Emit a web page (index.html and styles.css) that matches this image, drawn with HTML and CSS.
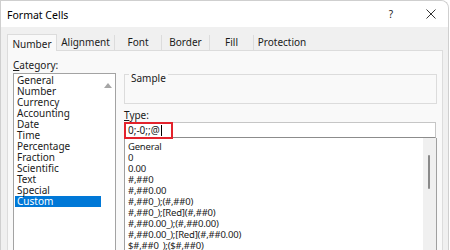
FILE: index.html
```html
<!DOCTYPE html>
<html>
<head>
<meta charset="utf-8">
<link rel="stylesheet" href="styles.css">
</head>
<body>
<div class="window">
  <div class="titlebar">
    <span class="title">Format Cells</span>
    <span class="help">?</span>
    <span class="close"><svg width="10" height="10" viewBox="0 0 10 10"><path d="M0.5 0.5 L9.5 9.5 M9.5 0.5 L0.5 9.5" stroke="#333" stroke-width="1" fill="none"/></svg></span>
  </div>
  <div class="tabs">
    <div class="tab tab-number active">Number</div>
    <div class="tab tab-align">Alignment</div>
    <div class="tab tab-font">Font</div>
    <div class="tab tab-border">Border</div>
    <div class="tab tab-fill">Fill</div>
    <div class="tab tab-prot">Protection</div>
  </div>
  <div class="panel">
    <div class="left">
      <div class="label"><u>C</u>ategory:</div>
      <div class="catlist">
        <div class="items">
          <div class="item">General</div>
          <div class="item">Number</div>
          <div class="item">Currency</div>
          <div class="item">Accounting</div>
          <div class="item">Date</div>
          <div class="item">Time</div>
          <div class="item">Percentage</div>
          <div class="item">Fraction</div>
          <div class="item">Scientific</div>
          <div class="item">Text</div>
          <div class="item">Special</div>
          <div class="item selected">Custom</div>
        </div>
        <div class="catscroll">
          <svg width="8" height="5" viewBox="0 0 8 5"><path d="M0 5 L4 0 L8 5 Z" fill="#a6a6a6"/></svg>
        </div>
      </div>
    </div>
    <div class="right">
      <div class="sample"><span class="legend">Sample</span></div>
      <div class="label"><u>T</u>ype:</div>
      <div class="typeinput">
        <span class="typetext">0;-0;;@</span><span class="caret"></span>
        <div class="redbox"></div>
      </div>
      <div class="typelist">
        <div class="items">
          <div class="item">General</div>
          <div class="item">0</div>
          <div class="item">0.00</div>
          <div class="item">#,##0</div>
          <div class="item">#,##0.00</div>
          <div class="item">#,##0_);(#,##0)</div>
          <div class="item">#,##0_);[Red](#,##0)</div>
          <div class="item">#,##0.00_);(#,##0.00)</div>
          <div class="item">#,##0.00_);[Red](#,##0.00)</div>
          <div class="item">$#,##0_);($#,##0)</div>
        </div>
        <div class="typescroll"><div class="thumb"></div></div>
      </div>
    </div>
  </div>
</div>
</body>
</html>
```

FILE: styles.css
```css
html, body {
  margin: 0;
  padding: 0;
  background: #ffffff;
  overflow: hidden;
}
body {
  width: 450px;
  height: 250px;
  font-family: "Noto Sans", "Open Sans", sans-serif;
  font-size: 10px;
  color: #1a1a1a;
}
.window {
  width: 447px;
  height: 260px;
  border: 1px solid #cfcfcf;
  border-bottom: none;
  border-top-right-radius: 8px;
  background: #f0f0f0;
  overflow: hidden;
}
.titlebar {
  height: 26px;
  background: #ffffff;
  display: flex;
  align-items: center;
  padding-left: 6px;
}
.title {
  font-size: 10.5px;
  color: #000;
  flex: 1;
  margin-top: 1px;
}
.help {
  font-size: 10px;
  color: #222;
  width: 10px;
  text-align: center;
  margin-right: 30px;
}
.close {
  display: flex;
  width: 10px;
  margin-right: 12px;
}
.tabs {
  display: flex;
  align-items: flex-end;
  height: 23px;
  padding-left: 6px;
}
.tab {
  height: 15px;
  line-height: 15px;
  text-align: center;
  border-right: 1px solid #dcdcdc;
  box-sizing: border-box;
  color: #1a1a1a;
}
.tab.active {
  height: 17px;
  line-height: 18px;
  background: #f9f9f9;
  border: 1px solid #dcdcdc;
  border-bottom: none;
  margin-bottom: -1px;
  position: relative;
  z-index: 1;
}
.tab-number { width: 50px; }
.tab-align { width: 58px; }
.tab-font { width: 47px; }
.tab-border { width: 48px; }
.tab-fill { width: 44px; }
.tab-prot { width: 56px; border-right: none; }
.panel {
  margin-left: 6px;
  width: 436px;
  height: 220px;
  box-sizing: border-box;
  border: 1px solid #dcdcdc;
  background: #f9f9f9;
  display: flex;
  gap: 8px;
  padding: 8px 5px 0 5px;
}
.label {
  line-height: 12px;
  height: 12px;
}
.label u {
  text-decoration-thickness: 1px;
  text-underline-offset: 1px;
}
.left {
  width: 103px;
  display: flex;
  flex-direction: column;
}
.left .label {
  margin-bottom: 2px;
}
.catlist {
  flex: 1;
  background: #fff;
  border: 1px solid #a3a3a3;
  display: flex;
  padding: 1px 0 0 1px;
}
.items {
  flex: 1;
}
.item {
  height: 11px;
  line-height: 11px;
  padding-left: 2px;
  white-space: nowrap;
}
.catlist .item.selected {
  background: #0078d7;
  color: #fff;
}
.catscroll {
  width: 14px;
  display: flex;
  justify-content: center;
  padding-top: 8px;
  align-items: flex-start;
}
.right {
  width: 313px;
  display: flex;
  flex-direction: column;
}
.sample {
  margin-top: 15px;
  height: 30px;
  box-sizing: border-box;
  border: 1px solid #dcdcdc;
  padding-left: 4px;
  display: flex;
  align-items: flex-start;
}
.legend {
  margin-top: -2px;
  line-height: 11px;
  height: 11px;
  padding: 0 2px;
  background: #f9f9f9;
}
.right .label {
  margin-top: 5px;
  margin-bottom: 1px;
}
.typeinput {
  position: relative;
  height: 16px;
  box-sizing: border-box;
  background: #fff;
  border: 1px solid #c6c6c6;
  border-bottom: 1px solid #8c8c8c;
  margin-right: 1px;
  display: flex;
  align-items: center;
  padding-left: 3px;
}
.typetext {
  line-height: 12px;
}
.caret {
  display: inline-block;
  width: 1px;
  height: 11px;
  background: #000;
  margin-left: 1px;
}
.redbox {
  position: absolute;
  left: -1px;
  top: -1px;
  width: 49px;
  height: 17px;
  border: 2px solid #e3232c;
  box-sizing: border-box;
}
.typelist {
  flex: 1;
  background: #fff;
  border: 1px solid #a0a0a0;
  border-top: none;
  display: flex;
}
.typelist .items {
  padding-top: 3px;
  padding-left: 1px;
  font-size: 9.5px;
  letter-spacing: -0.2px;
}
.typescroll {
  width: 13px;
  background: #f0f0f0;
}
.thumb {
  margin: 17px 0 0 5px;
  width: 2px;
  height: 34px;
  border-radius: 1px;
  background: #8a8a8a;
}
```
